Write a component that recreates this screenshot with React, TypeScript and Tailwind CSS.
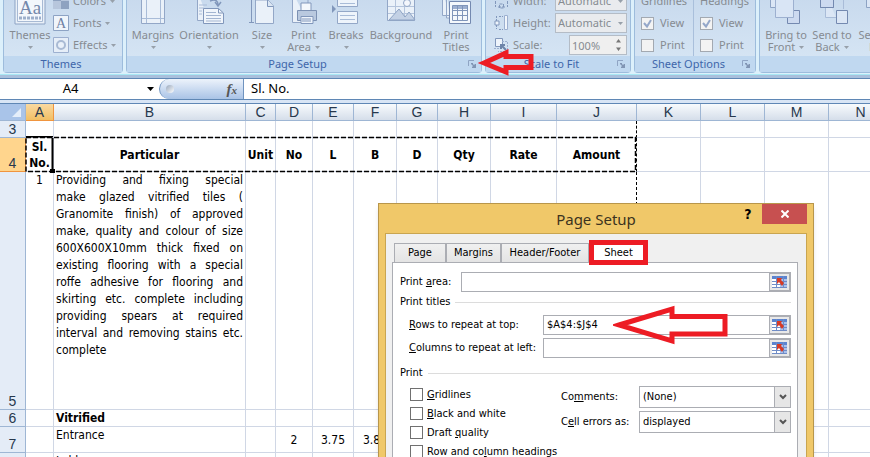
import { useState } from "react";
import type { ReactNode } from "react";
import clsx from "clsx";

interface Column {
  id: string;
  width: string;
}

interface SheetRow {
  number: number;
  height: string;
  cells: Record<string, string>;
}

const columns: Column[] = [
  { id: "A", width: "w-[28px]" },
  { id: "B", width: "w-[192px]" },
  { id: "C", width: "w-[30px]" },
  { id: "D", width: "w-[37px]" },
  { id: "E", width: "w-[41px]" },
  { id: "F", width: "w-[43px]" },
  { id: "G", width: "w-[41px]" },
  { id: "H", width: "w-[53px]" },
  { id: "I", width: "w-[66px]" },
  { id: "J", width: "w-[80px]" },
  { id: "K", width: "w-[64px]" },
  { id: "L", width: "w-[64px]" },
  { id: "M", width: "w-[64px]" },
  { id: "N", width: "w-[64px]" },
];

const rows: SheetRow[] = [
  { number: 3, height: "h-[17px]", cells: {} },
  {
    number: 4,
    height: "h-[34px]",
    cells: {
      A: "Sl. No.", B: "Particular", C: "Unit", D: "No", E: "L",
      F: "B", G: "D", H: "Qty", I: "Rate", J: "Amount",
    },
  },
  { number: 5, height: "h-[238px]", cells: { A: "1" } },
  { number: 6, height: "h-[17px]", cells: { B: "Vitrified" } },
  { number: 7, height: "h-[26px]", cells: { B: "Entrance", D: "2", E: "3.75", F: "3.82" } },
  { number: 8, height: "h-[26px]", cells: { B: "Lobby" } },
];

// Item description, broken where the sheet breaks it
const description = [
  "Providing and fixing special",
  "make glazed vitrified tiles (",
  "Granomite finish) of approved",
  "make, quality and colour of size",
  "600X600X10mm thick fixed on",
  "existing flooring with a special",
  "roffe adhesive for flooring and",
  "skirting etc. complete including",
  "providing spears at required",
  "interval and removing stains etc.",
  "complete",
];

/* ---------- Ribbon icons ---------- */

function ThemesIcon() {
  return (
    <svg width="32" height="32" viewBox="0 0 32 32">
      <path d="M1 0V31H31V0" fill="#e9f0f8" stroke="#8da3c4" />
      <path d="M3.500 0V28.500H28.500V0" fill="#f3f7fc" stroke="#a8bad4" />
      <text x="5" y="21" fontSize="19" fontFamily="Liberation Serif" fill="#7488ab">Aa</text>
      <path d="M5 25H27" stroke="#9dafcb" strokeWidth="3" strokeDasharray="3 1" />
    </svg>
  );
}

function MarginsIcon() {
  return (
    <svg width="32" height="32" viewBox="0 0 32 32">
      <path d="M4.500-1V30.500H27.500V-1Z" fill="#eaf1f9" stroke="#93a7c7" />
      <path d="M9.500 0V30M23.500 0V30M5 25.500H27" stroke="#a9bcd8" />
    </svg>
  );
}

function OrientationIcon() {
  return (
    <svg width="32" height="32" viewBox="0 0 32 32">
      <path d="M4.500-1V27.500H16" fill="#eaf1f9" stroke="#93a7c7" />
      <path d="M6 12h8M6 15h5M6 18h3M6 21h3" stroke="#a9bcd8" />
      <path d="M10.500 15.500H25.500L30.500 20V30.500H10.500Z" fill="#f0f5fb" stroke="#8197bb" />
      <path d="M25.500 15.500V20H30" fill="none" stroke="#8197bb" />
      <path d="M13 19.500H23M13 22.500H28M13 25.500H28M13 28H28" stroke="#a3b5d1" />
      <path d="M17 8Q25 5 25 12M22 9l3 4 3-4" fill="none" stroke="#8197bb" strokeWidth="1.500" />
    </svg>
  );
}

function SizeIcon() {
  return (
    <svg width="32" height="32" viewBox="0 0 32 32">
      <path d="M9.500-1V30.500H27.500V13L22 7H9Z" fill="#eaf1f9" stroke="#93a7c7" />
      <path d="M21.500 7V13.500H27.500" fill="#dce7f4" stroke="#8197bb" />
      <path d="M5.500 0V30M3 29.500H8" stroke="#8197bb" />
    </svg>
  );
}

function PrintAreaIcon() {
  return (
    <svg width="32" height="32" viewBox="0 0 32 32">
      <path d="M4.500-1V29.500H20M20 0V16" fill="#eaf1f9" stroke="#93a7c7" />
      <path d="M13 10H23V19H13Z" fill="#f4f8fc" stroke="#8197bb" />
      <path d="M9.500 17.500H28.500V27.500H9.500Z" fill="#b9c9df" stroke="#7c91b3" />
      <path d="M13 23.500H25V30.500H13Z" fill="#eef4fb" stroke="#8197bb" />
      <path d="M14 26H23M14 28H23" stroke="#8197bb" />
    </svg>
  );
}

function BreaksIcon() {
  return (
    <svg width="32" height="32" viewBox="0 0 32 32">
      <path d="M7.500 0H27.500V13.500H7.500Z" fill="#eef4fb" stroke="#93a7c7" />
      <path d="M7.500 18.500H27.500V30.500H7.500Z" fill="#eef4fb" stroke="#93a7c7" />
      <path d="M10 10.500H25M10 22.500H25M10 26.500H25" stroke="#a9bcd8" />
      <path d="M2 12L6 16L2 20Z" fill="#8197bb" />
    </svg>
  );
}

function BackgroundIcon() {
  return (
    <svg width="32" height="32" viewBox="0 0 32 32">
      <path d="M2.500-1V27.500H29.500V-1Z" fill="#eaf1f9" stroke="#93a7c7" />
      <path d="M10.500 0V27M19.500 0V27M3 13.500H29M3 20.500H29" stroke="#b4c4dc" />
      <circle cx="22" cy="10" r="3.500" fill="#f4f7fc" stroke="#93a7c7" />
      <path d="M4 27L14 16L20 24L24 19L30 27Z" fill="#c3d1e5" stroke="#8da3c4" />
    </svg>
  );
}

function PrintTitlesIcon() {
  return (
    <svg width="32" height="32" viewBox="0 0 32 32">
      <path d="M2.500-1V22.500H10M6.500-1V25H10" fill="#eaf1f9" stroke="#93a7c7" />
      <path d="M9.500 8.500H30.500V30.500H9.500Z" fill="#f4f8fc" stroke="#7489b0" />
      <path d="M13 12H28V16H13Z" fill="#9db0d0" />
      <path d="M12.500 12.500H27.500V27.500H12.500ZM17.500 12V27M22.500 12V27M13 17.500H27M13 22.500H27" fill="none" stroke="#7f95ba" />
    </svg>
  );
}

function ArrangeIcon({ back }: { back?: boolean }) {
  if (back) {
    return (
      <svg width="32" height="32" viewBox="0 0 32 32">
        <path d="M4.500 1.500H17.500V14.500H4.500Z" fill="#cddaf0" stroke="#7489b0" />
        <path d="M9.500 0V24.500H20M27.500 0V16" fill="#dbe6f5" stroke="#a9bcd8" />
        <path d="M4.500 2V14.500H17.500V2" fill="#cddaf0" stroke="#7489b0" />
        <path d="M20.500 17.500H31.500V30.500H20.500Z" fill="#dbe6f5" stroke="#7489b0" />
      </svg>
    );
  }
  return (
    <svg width="32" height="32" viewBox="0 0 32 32">
      <path d="M0.500 0.500H13.500V14.500H0.500Z" fill="#dbe6f5" stroke="#8da3c4" />
      <path d="M17.500 17.500H29.500V30.500H17.500Z" fill="#cddaf0" stroke="#7489b0" />
      <path d="M5.500-1V24.500H23.500V-1Z" fill="#d9e5f5" stroke="#9db0d0" />
    </svg>
  );
}

function LauncherIcon() {
  return (
    <svg width="9" height="9" viewBox="0 0 9 9">
      <path d="M0.500 6V0.500H6" fill="none" stroke="#8fa4c4" />
      <path d="M3 3h2v1l1 1 1-1h1v4H4V7l1-1-2-2Z" fill="#8195b4" />
    </svg>
  );
}

function Caret() {
  return (
    <svg width="5" height="3" viewBox="0 0 5 3" className="shrink-0">
      <path d="M0 0H5L2.500 3Z" fill="#97a0aa" />
    </svg>
  );
}

/* ---------- Ribbon pieces ---------- */

function RibbonGroup({ title, width, launcher, children }: {
  title: string;
  width: string;
  launcher?: boolean;
  children: ReactNode;
}) {
  return (
    <section
      className={clsx(
        "flex h-[90px] shrink-0 flex-col rounded-b-sm border border-t-0 border-[#9dbcdc] bg-gradient-to-b from-[#c5d7ec] to-[#d8e7f5]",
        width
      )}
    >
      <div className="flex flex-1 items-end px-[3px]">{children}</div>
      <div className="flex h-4 items-center bg-[#c0d8f0] pr-1">
        <h2 className="flex-1 text-center text-[11px] leading-4 text-[#3e66aa]">{title}</h2>
        {launcher && (
          <button aria-label={`${title} settings`}>
            <LauncherIcon />
          </button>
        )}
      </div>
    </section>
  );
}

function BigButton({ icon, lines, width, caret }: {
  icon: ReactNode;
  lines: string[];
  width: string;
  caret?: boolean;
}) {
  return (
    <button className={clsx("flex shrink-0 flex-col items-center pb-[3px] leading-3", width)}>
      {icon}
      <span className="mt-1 h-3 whitespace-nowrap">{lines[0]}</span>
      <span className="flex h-3 items-center gap-1 whitespace-nowrap">
        {lines[1]}
        {caret && <Caret />}
      </span>
    </button>
  );
}

function SmallButton({ icon, label }: { icon: ReactNode; label: string }) {
  return (
    <button className="flex h-[22px] items-center gap-1">
      {icon}
      {label}
      <Caret />
    </button>
  );
}

function RibbonCheck({ label, checked }: { label: string; checked?: boolean }) {
  return (
    <label className="flex h-[22px] items-center gap-[6px]">
      <span className="relative flex">
        <input
          type="checkbox"
          defaultChecked={checked}
          className="peer size-[13px] appearance-none border border-[#a3a9b1] bg-[#f3f3f3]"
        />
        <svg viewBox="0 0 13 13" className="pointer-events-none absolute inset-0 hidden peer-checked:block">
          <path d="M3 6L6 9.500L10 3" fill="none" stroke="#94a7c9" strokeWidth="2" />
        </svg>
      </span>
      {label}
    </label>
  );
}

function Ribbon() {
  return (
    <header className="flex h-[75px] items-end gap-[3px] overflow-hidden border-b border-[#a8e8f4] bg-[#dcf0fb] px-[3px] pb-px text-[11px] leading-[14px] text-[#868b91]">
      <RibbonGroup title="Themes" width="w-[120px]">
        <BigButton icon={<ThemesIcon />} lines={["Themes"]} width="w-[46px]" caret />
        <div className="flex flex-col">
          <SmallButton
            label="Colors"
            icon={
              <svg width="16" height="16" viewBox="0 0 16 16">
                <path d="M0 0H16V16H0Z" fill="#8ea2c0" />
                <path d="M8 0H16V8H8ZM0 8H8V16H0Z" fill="#b7c6dc" />
              </svg>
            }
          />
          <SmallButton
            label="Fonts"
            icon={
              <svg width="16" height="16" viewBox="0 0 16 16">
                <path d="M0.500 0.500H15.500V15.500H0.500Z" fill="#f0f5fb" stroke="#8da3c4" />
                <text x="3" y="13" fontSize="14" fontFamily="Liberation Serif" fill="#6c80a4">A</text>
              </svg>
            }
          />
          <SmallButton
            label="Effects"
            icon={
              <svg width="16" height="16" viewBox="0 0 16 16">
                <path d="M0.500 0.500H15.500V15.500H0.500Z" fill="#e6eef8" stroke="#9db0d0" />
                <circle cx="8" cy="8" r="4" fill="#e9f0f9" stroke="#a9bad4" strokeWidth="2" />
              </svg>
            }
          />
        </div>
      </RibbonGroup>

      <RibbonGroup title="Page Setup" width="w-[356px]" launcher>
        <BigButton icon={<MarginsIcon />} lines={["Margins"]} width="w-[46px]" caret />
        <BigButton icon={<OrientationIcon />} lines={["Orientation"]} width="w-[66px]" caret />
        <BigButton icon={<SizeIcon />} lines={["Size"]} width="w-[40px]" caret />
        <BigButton icon={<PrintAreaIcon />} lines={["Print", "Area"]} width="w-[43px]" caret />
        <BigButton icon={<BreaksIcon />} lines={["Breaks"]} width="w-[42px]" caret />
        <BigButton icon={<BackgroundIcon />} lines={["Background"]} width="w-[68px]" />
        <BigButton icon={<PrintTitlesIcon />} lines={["Print", "Titles"]} width="w-[42px]" />
      </RibbonGroup>

      <RibbonGroup title="Scale to Fit" width="w-[146px]" launcher>
        <div className="flex flex-1 flex-col pl-[5px]">
          {["Width:", "Height:"].map((label, i) => (
            <label key={label} className="flex h-[22px] items-center gap-1">
              <svg width="15" height="16" viewBox="0 0 15 16" className="shrink-0">
                {i === 0 ? (
                  <path d="M1.500 0V14M13.500 0V14M4 14H11M5.500 11H9.500V15H5.500Z" fill="none" stroke="#8197bb" strokeDasharray="3 1" />
                ) : (
                  <>
                    <path d="M2.500 1V14M5 1.500H9M5 14.500H9" stroke="#8197bb" strokeDasharray="2 1" />
                    <path d="M1 6H5V10H1Z" fill="#eef4fb" stroke="#8197bb" />
                    <path d="M10.500 0.500H13.500V14.500H10.500Z" fill="#f0f5fb" stroke="#9db0d0" />
                  </>
                )}
              </svg>
              <span className="flex-1">{label}</span>
              <span className="relative flex items-center">
                <select className="h-5 w-[72px] appearance-none border border-[#b4bcc6] bg-[#e9ebee] pl-[2px]">
                  <option>Automatic</option>
                </select>
                <span className="pointer-events-none absolute right-1"><Caret /></span>
              </span>
            </label>
          ))}
          <label className="flex h-[22px] items-center gap-1">
            <svg width="15" height="14" viewBox="0 0 15 14" className="shrink-0">
              <path d="M1.500 0.500H8.500V8.500H1.500Z" fill="#eef4fb" stroke="#8197bb" />
              <path d="M0 10.500H9M8 3.500H13.500V13.500H4" fill="none" stroke="#9db0d0" strokeDasharray="2 1" />
              <path d="M7 7l5 5M7 11V7h4" fill="none" stroke="#6d84a9" strokeWidth="2" />
            </svg>
            <span className="flex-1">Scale:</span>
            <span className="relative flex items-center">
              <input defaultValue="100%" className="h-5 w-[58px] border border-[#b4bcc6] bg-[#efefef] pl-[2px]" />
              <svg width="5" height="12" viewBox="0 0 5 12" className="absolute right-[6px]">
                <path d="M0 3.500L2.500 0L5 3.500ZM0 8.500H5L2.500 12Z" fill="#777" />
              </svg>
            </span>
          </label>
        </div>
      </RibbonGroup>

      <RibbonGroup title="Sheet Options" width="w-[122px]" launcher>
        {["Gridlines", "Headings"].map((title, i) => (
          <fieldset
            key={title}
            className={clsx("flex flex-1 flex-col pl-[3px]", i === 1 && "border-l border-[#a9bfdb] pl-[6px]")}
          >
            <span className="h-[22px] leading-[22px]">{title}</span>
            <RibbonCheck label="View" checked />
            <RibbonCheck label="Print" />
          </fieldset>
        ))}
      </RibbonGroup>

      <RibbonGroup title="" width="w-[300px]">
        <BigButton icon={<ArrangeIcon />} lines={["Bring to", "Front"]} width="w-[46px]" caret />
        <BigButton icon={<ArrangeIcon back />} lines={["Send to", "Back"]} width="w-[46px]" caret />
        <BigButton icon={<ArrangeIcon />} lines={["Selection", "Pane"]} width="w-[54px]" />
      </RibbonGroup>
    </header>
  );
}

/* ---------- Formula bar ---------- */

function FormulaBar() {
  return (
    <div className="flex h-[22px] border-y border-[#5f87b5] bg-white text-[13px] text-black">
      <input aria-label="Name box" defaultValue="A4" className="w-[141px] text-center" />
      <button aria-label="Names" className="flex w-[18px] items-center justify-center">
        <svg width="7" height="4" viewBox="0 0 7 4">
          <path d="M0 0H7L3.500 4Z" fill="#000" />
        </svg>
      </button>
      <div className="flex w-[85px] items-center justify-between rounded-l-full border-x border-[#6f93bf] bg-gradient-to-b from-[#edf3fb] to-[#a9c3e6] px-[6px]">
        <span className="size-2 rounded-full bg-gradient-to-br from-[#9aa9bd] to-white" />
        <button className="font-['Liberation_Serif',serif] text-[15px] font-bold text-[#555] italic">
          f<span className="text-[11px]">x</span>
        </button>
      </div>
      <input aria-label="Formula" defaultValue="Sl. No." className="min-w-0 flex-1 pl-[7px]" />
    </div>
  );
}

/* ---------- Worksheet ---------- */

function Marquee() {
  return (
    <svg width="612" height="38" viewBox="0 0 612 38" className="pointer-events-none absolute -top-[2px] left-[25px]">
      <path d="M1 1.500H610.500V35.500H1Z" fill="none" stroke="#000" strokeWidth="1.500" strokeDasharray="5 2" />
      <path d="M1 0.500H28M27.500 2V33" stroke="#000" strokeWidth="2" />
      <path d="M25 33H30V37H25Z" fill="#000" />
    </svg>
  );
}

function Worksheet() {
  return (
    <table className="w-[893px] table-fixed border-separate border-spacing-0 border-t border-[#5f87b5] font-['DejaVu_Sans_Condensed','DejaVu_Sans',sans-serif] text-[12px] leading-4 text-black">
      <colgroup>
        <col className="w-[26px]" />
        {columns.map((col) => (
          <col key={col.id} className={col.width} />
        ))}
      </colgroup>
      <thead className="font-['Liberation_Sans',Arial,sans-serif] text-[14px]">
        <tr className="h-[17px]">
          <th className="border-r border-b border-[#9eb6d4] bg-[#a9c4e9] p-0">
            <svg width="25" height="16" viewBox="0 0 25 16">
              <path d="M21 4V13H12Z" fill="#e4eefa" />
            </svg>
          </th>
          {columns.map((col) => (
            <th
              key={col.id}
              className={clsx(
                "border-r border-b p-0 font-normal text-[#27384d]",
                col.id === "A"
                  ? "border-[#f0953f] bg-gradient-to-b from-[#f9d9a0] to-[#f2bf63]"
                  : "border-[#9eb6d4] bg-gradient-to-b from-[#f8fbfd] to-[#d5deea]"
              )}
            >
              {col.id}
            </th>
          ))}
        </tr>
      </thead>
      <tbody>
        {rows.map((row) => (
          <tr key={row.number} className={row.height}>
            <th
              className={clsx(
                "relative border-r border-b p-0 align-bottom font-['Liberation_Sans',Arial,sans-serif] text-[14px] font-normal text-[#27384d]",
                row.number === 4 ? "border-[#f0953f] bg-[#ffd58d]" : "border-[#9eb6d4] bg-[#e4ecf7]"
              )}
            >
              {row.number}
              {row.number === 4 && <Marquee />}
            </th>
            {columns.map((col) => (
              <td
                key={col.id}
                className={clsx(
                  "overflow-hidden border-r border-b border-[#d0d7e5] p-0",
                  col.id === "B" && row.number !== 4 ? "px-[2px]" : "text-center",
                  row.number === 5 && "leading-[17px]",
                  col.id === "J" && row.number < 6 && "border-r-black [border-right-style:dashed]",
                  row.number === 4 || (row.number === 7 && col.id !== "B") ? "align-middle" : "align-top",
                  (row.number === 4 || row.number === 6) && "font-bold",
                )}
              >
                {row.cells[col.id]}
                {row.number === 5 && col.id === "B" && description.map((line) => (
                  <p key={line} className="text-justify [text-align-last:justify] last:[text-align-last:left]">{line}</p>
                ))}
              </td>
            ))}
          </tr>
        ))}
      </tbody>
    </table>
  );
}

/* ---------- Page Setup dialog ---------- */

function RangeField({ label, accessKey, width, value }: {
  label: string;
  accessKey: string;
  width: string;
  value?: string;
}) {
  const at = label.indexOf(accessKey);
  return (
    <div className="flex h-5 items-center justify-between">
      <label htmlFor={label}>
        {label.slice(0, at)}<u>{accessKey}</u>{label.slice(at + 1)}
      </label>
      <div className={clsx("flex h-5 border border-[#abadb3] bg-white", width)}>
        <input id={label} defaultValue={value} className="min-w-0 flex-1 pl-[3px]" />
        <button aria-label={`Collapse ${label}`} className="flex w-[21px] items-center justify-center border border-[#abadb3] bg-[#e8e8e8]">
          <svg width="15" height="12" viewBox="0 0 15 12">
            <path d="M0 0H15V12H0Z" fill="#fff" />
            <path d="M0 0H15V3H0Z" fill="#5b83cf" />
            <path d="M8 3H15V12H8Z" fill="#a9c0ec" />
            <path d="M0 5.500H15M0 8.500H15M0 11.500H15M4.500 0V12M11.500 0V12" stroke="#6f8cc6" />
            <path d="M5 2H10L9 4L12 7L10 10L7 6L5 8Z" fill="#d83a24" />
          </svg>
        </button>
      </div>
    </div>
  );
}

function SectionTitle({ children }: { children: ReactNode }) {
  return (
    <div className="flex h-4 items-center gap-[5px]">
      <h3>{children}</h3>
      <hr className="flex-1 border-[#dcdcdc]" />
    </div>
  );
}

function DialogSelect({ label, accessKey, value }: { label: string; accessKey: string; value: string }) {
  const at = label.indexOf(accessKey);
  return (
    <div className="flex h-[22px] items-center justify-between">
      <label htmlFor={label}>
        {label.slice(0, at)}<u>{accessKey}</u>{label.slice(at + 1)}
      </label>
      <div className="relative">
        <select id={label} className="block h-[22px] w-[152px] appearance-none border border-[#abadb3] bg-white pl-[3px]">
          <option>{value}</option>
        </select>
        <span className="pointer-events-none absolute inset-y-px right-px flex w-4 items-center justify-center border-l border-[#abadb3] bg-[#e6e6e6]">
          <svg width="8" height="6" viewBox="0 0 8 6">
            <path d="M1 1L4 4L7 1" fill="none" stroke="#555" strokeWidth="2" />
          </svg>
        </span>
      </div>
    </div>
  );
}

const tabs = [
  { name: "Page", width: "w-[52px]" },
  { name: "Margins", width: "w-[55px]" },
  { name: "Header/Footer", width: "w-[88px]" },
];

const printOptions = [
  ["", "G", "ridlines"],
  ["", "B", "lack and white"],
  ["Draft ", "q", "uality"],
  ["Row and co", "l", "umn headings"],
];

function PageSetupDialog({ onClose }: { onClose: () => void }) {
  return (
    <div
      role="dialog"
      aria-label="Page Setup"
      className="absolute top-[203px] left-[378px] w-[436px] border border-[#b8964b] bg-[#f0c869] px-[6px] pb-[6px] font-['DejaVu_Sans_Condensed','DejaVu_Sans',sans-serif] text-[11px] leading-[14px] text-black shadow-md"
    >
      <div className="relative flex h-[29px] items-center justify-center">
        <h1 className="font-['Noto_Sans',sans-serif] text-[15px] text-[#3c3320]">Page Setup</h1>
        <div className="absolute top-0 right-0 flex h-5">
          <button aria-label="Help" className="w-7 text-[14px] font-bold">?</button>
          <button aria-label="Close" onClick={onClose} className="flex w-[45px] items-center justify-center bg-[#c75050]">
            <svg width="8" height="8" viewBox="0 0 8 8">
              <path d="M0.500 0.500L7.500 7.500M7.500 0.500L0.500 7.500" stroke="#fff" strokeWidth="2" />
            </svg>
          </button>
        </div>
      </div>

      <div className="border border-[#c9a550] bg-[#f0f0f0] pr-2 pb-2 pl-[6px]">
        <div role="tablist" className="flex h-[28px] items-end pl-[2px]">
          {tabs.map((tab) => (
            <button
              key={tab.name}
              role="tab"
              className={clsx("h-[19px] border border-b-0 border-[#abadb3] bg-gradient-to-b from-[#f0f0f0] to-[#e4e4e4] whitespace-nowrap", tab.width)}
            >
              {tab.name}
            </button>
          ))}
          <button role="tab" aria-selected="true" className="relative z-10 -mb-[3px] h-[25px] w-[59px] border-[5px] border-[#ed1c24] bg-white">
            Sheet
          </button>
        </div>

        <div className="relative flex h-[240px] flex-col border border-[#abadb3] bg-white pt-[9px] pr-[6px] pl-[7px]">
          <RangeField label="Print area:" accessKey="a" width="w-[330px]" />
          <div className="mt-[2px]">
            <SectionTitle>Print titles</SectionTitle>
          </div>
          <div className="mt-[5px] flex flex-col gap-[3px] pl-[9px]">
            <RangeField label="Rows to repeat at top:" accessKey="R" width="w-[248px]" value="$A$4:$J$4" />
            <RangeField label="Columns to repeat at left:" accessKey="C" width="w-[248px]" />
          </div>
          <div className="mt-[7px]">
            <SectionTitle>Print</SectionTitle>
          </div>
          <div className="mt-1 flex justify-between pl-[10px]">
            <div className="flex flex-col">
              {printOptions.map(([before, key, after]) => (
                <label key={after} className="flex h-[19px] items-center gap-1 whitespace-nowrap">
                  <input type="checkbox" className="size-[13px] appearance-none border border-[#707070] bg-white" />
                  <span>{before}<u>{key}</u>{after}</span>
                </label>
              ))}
            </div>
            <div className="flex w-[230px] flex-col gap-[3px] pt-px">
              <DialogSelect label="Comments:" accessKey="m" value="(None)" />
              <DialogSelect label="Cell errors as:" accessKey="e" value="displayed" />
            </div>
          </div>
          {/* callout arrow pointing at the title rows range */}
          <svg width="118" height="42" viewBox="0 0 118 42" className="pointer-events-none absolute top-[42px] left-[220px]">
            <path d="M6 20L59 4V11.500H112V29H59V36Z" fill="none" stroke="#ed1c24" strokeWidth="5" />
          </svg>
        </div>
      </div>
    </div>
  );
}

export default function App() {
  const [dialogOpen, setDialogOpen] = useState(true);

  return (
    <div className="relative h-screen overflow-hidden bg-white font-['Noto_Sans',sans-serif]">
      <div className="bg-[#a9c0dc] pb-[3px]">
        <Ribbon />
      </div>
      <div className="bg-[#d8e5f5] pb-[3px]">
        <FormulaBar />
      </div>
      <Worksheet />
      {/* callout arrow pointing at the Page Setup launcher */}
      <svg width="60" height="32" viewBox="0 0 60 32" className="pointer-events-none absolute top-[47px] left-[476px]">
        <path d="M8 16L30 6V9.500H55V20.500H30V25Z" fill="none" stroke="#ed1c24" strokeWidth="5" />
      </svg>
      {dialogOpen && <PageSetupDialog onClose={() => setDialogOpen(false)} />}
    </div>
  );
}
